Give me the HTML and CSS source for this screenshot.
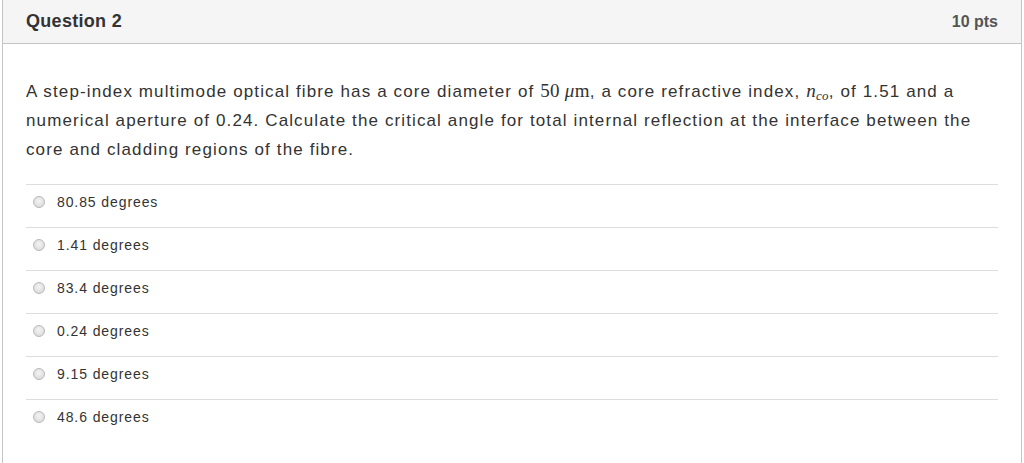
FILE: index.html
```html
<!DOCTYPE html>
<html>
<head>
<meta charset="utf-8">
<link rel="stylesheet" href="styles.css">
</head>
<body>
<div class="quiz">
  <div class="header">
    <span class="title">Question 2</span>
    <span class="pts">10 pts</span>
  </div>
  <div class="content">
    <p class="question">A step-index multimode optical fibre has a core diameter of <span class="math">50&nbsp;<i>μ</i>m</span>, a core refractive index, <span class="math"><i>n</i><sub><i>co</i></sub></span>, of 1.51 and a numerical aperture of 0.24. Calculate the critical angle for total internal reflection at the interface between the core and cladding regions of the fibre.</p>
    <div class="answers">
      <label class="answer"><span class="radio"></span><span class="atext">80.85 degrees</span></label>
      <label class="answer"><span class="radio"></span><span class="atext">1.41 degrees</span></label>
      <label class="answer"><span class="radio"></span><span class="atext">83.4 degrees</span></label>
      <label class="answer"><span class="radio"></span><span class="atext">0.24 degrees</span></label>
      <label class="answer"><span class="radio"></span><span class="atext">9.15 degrees</span></label>
      <label class="answer"><span class="radio"></span><span class="atext">48.6 degrees</span></label>
    </div>
  </div>
</div>
</body>
</html>
```
FILE: styles.css
```css
html, body {
  margin: 0;
  padding: 0;
  background: #fff;
}
body {
  font-family: "Liberation Sans", Arial, sans-serif;
  color: #333;
}
.quiz {
  margin: 0 2px 0 2px;
  border-left: 1px solid #c4c4c4;
  border-right: 1px solid #c4c4c4;
  height: 463px;
  box-sizing: border-box;
}
.header {
  display: flex;
  justify-content: space-between;
  align-items: center;
  height: 43px;
  background: #f5f5f5;
  border-bottom: 1px solid #c4c4c4;
  padding: 0 23px 0 23px;
  font-weight: bold;
  color: #333;
}
.title {
  font-size: 18px;
  letter-spacing: 0.3px;
}
.pts {
  font-size: 16px;
  color: #555;
}
.content {
  padding: 0 23px;
}
.question {
  margin: 0;
  padding-top: 32px;
  padding-bottom: 20px;
  font-size: 17px;
  letter-spacing: 1.12px;
  line-height: 29px;
  color: #333;
}
.math {
  font-family: "Liberation Serif", "Times New Roman", serif;
  font-size: 19px;
  letter-spacing: 0.3px;
}
.math sub {
  font-size: 13px;
  vertical-align: -3px;
  line-height: 0;
}
.answers {
  display: flex;
  flex-direction: column;
}
.answer {
  display: flex;
  align-items: center;
  border-top: 1px solid #dddddd;
  padding-left: 7px;
  padding-bottom: 9px;
  box-sizing: border-box;
  height: 43px;
  font-size: 14px;
  letter-spacing: 0.9px;
  color: #333;
}
.radio {
  width: 12px;
  height: 12px;
  border-radius: 50%;
  border: 1px solid #b9b9b9;
  background: radial-gradient(circle at 50% 40%, #f4f4f4 0%, #dedede 70%, #d2d2d2 100%);
  box-sizing: border-box;
  margin-right: 12px;
  flex: none;
}
```
